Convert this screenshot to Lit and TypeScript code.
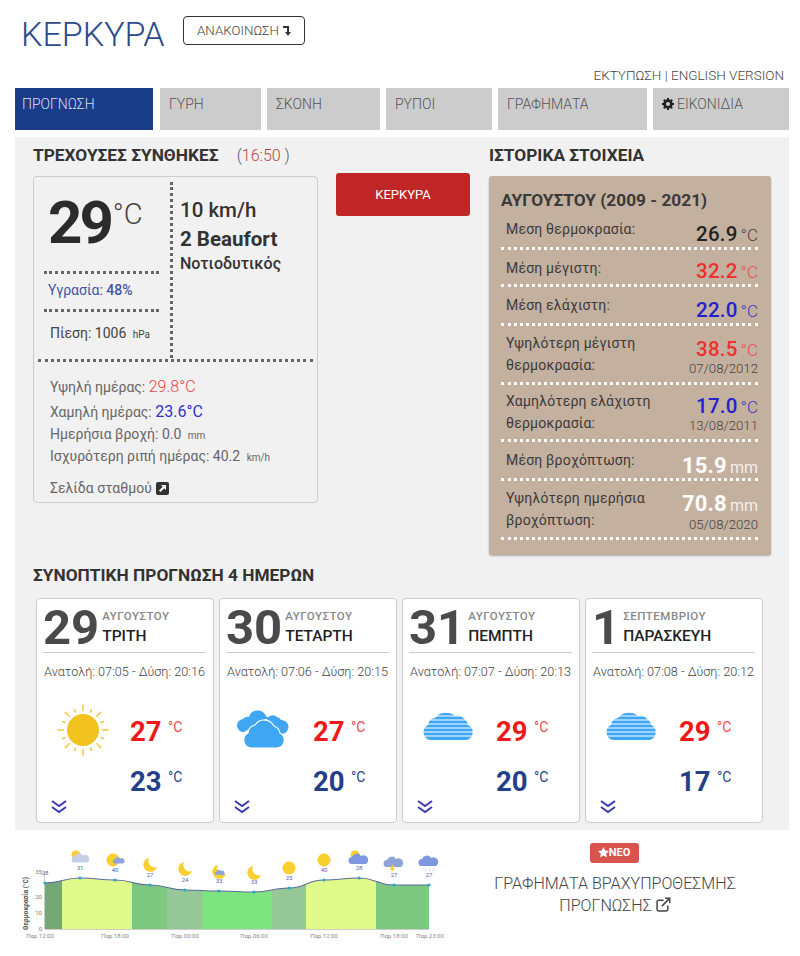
import { LitElement, html, css, svg } from "lit";
import { customElement } from "lit/decorators.js";

const sunIcon = () => html`<svg class="wx" viewBox="0 0 52 52"><circle cx="26" cy="26" r="16" fill="#f2c21f"/>
  <g stroke="#f2c84a" stroke-width="1.600" stroke-linecap="round">
  ${[...Array(16).keys()].map((i) => {
    const a = (i * Math.PI) / 8;
    const r1 = 19.5, r2 = i % 2 === 0 ? 25 : 22;
    return svg`<line x1=${26 + r1 * Math.cos(a)} y1=${26 + r1 * Math.sin(a)} x2=${26 + r2 * Math.cos(a)} y2=${26 + r2 * Math.sin(a)}/>`;
  })}</g></svg>`;

const cloudsIcon = () => html`<svg class="wx cl" viewBox="0 0 52 42">
  <g fill="#3ea6f2">
    <path d="M7 24a6.500 6.500 0 0 1-1-13 6 6 0 0 1 6-2 9 9 0 0 1 17-1 6 6 0 0 1 3 3h-4L7 24z"/>
    <path d="M30 12a6 6 0 0 1 10-3 6 6 0 0 1 4 3 7 7 0 0 1 1 14h-8z"/>
    <path d="M14 40a8 8 0 0 1-3-15 9 9 0 0 1 7-8 11 11 0 0 1 19 1 9 9 0 0 1 6 7 8 8 0 0 1-3 15z" stroke="#fff" stroke-width="1.200"/>
  </g></svg>`;

const stripeIcon = () => html`<svg class="wx wide" viewBox="0 0 54 36">
  <path d="M9 34a8 8 0 0 1-2-15 8 8 0 0 1 7-7 14 14 0 0 1 20-2 8 8 0 0 1 9 3 8 8 0 0 1 4 6 8 8 0 0 1-1 15z" fill="#3ea6f2"/>
  <g stroke="#fff" stroke-width="1.200">${[6, 10, 14, 18, 22, 26, 30].map((y) => svg`<line x1="0" x2="54" y1=${y} y2=${y}/>`)}</g>
</svg>`;

const chevrons = html`<svg class="chev" viewBox="0 0 18 16" fill="none" stroke="#3a3ab4" stroke-width="2"><path d="M2 2l7 5 7-5M2 8l7 5 7-5"/></svg>`;

type Fc = { d: string; m: string; w: string; sun: string; hi: string; lo: string; icon: () => unknown };
const FC: Fc[] = [
  { d: "29", m: "ΑΥΓΟΥΣΤΟΥ", w: "ΤΡΙΤΗ", sun: "Ανατολή: 07:05 - Δύση: 20:16", hi: "27", lo: "23", icon: sunIcon },
  { d: "30", m: "ΑΥΓΟΥΣΤΟΥ", w: "ΤΕΤΑΡΤΗ", sun: "Ανατολή: 07:06 - Δύση: 20:15", hi: "27", lo: "20", icon: cloudsIcon },
  { d: "31", m: "ΑΥΓΟΥΣΤΟΥ", w: "ΠΕΜΠΤΗ", sun: "Ανατολή: 07:07 - Δύση: 20:13", hi: "29", lo: "20", icon: stripeIcon },
  { d: "1", m: "ΣΕΠΤΕΜΒΡΙΟΥ", w: "ΠΑΡΑΣΚΕΥΗ", sun: "Ανατολή: 07:08 - Δύση: 20:12", hi: "29", lo: "17", icon: stripeIcon },
];

type Hist = { l: string[]; v: string; u: string; c: string; date?: string; h: number; lm: number; vm: number };
const HIST: Hist[] = [
  { l: ["Μεση θερμοκρασία:"], v: "26.9", u: "°C", c: "black", h: 32, lm: 0, vm: 4 },
  { l: ["Μέση μέγιστη:"], v: "32.2", u: "°C", c: "red", h: 37, lm: 7, vm: 9 },
  { l: ["Μέση ελάχιστη:"], v: "22.0", u: "°C", c: "blue", h: 39, lm: 7, vm: 11 },
  { l: ["Υψηλότερη μέγιστη", "θερμοκρασία:"], v: "38.5", u: "°C", c: "red", date: "07/08/2012", h: 59, lm: 6, vm: 11 },
  { l: ["Χαμηλότερη ελάχιστη", "θερμοκρασία:"], v: "17.0", u: "°C", c: "blue", date: "13/08/2011", h: 57, lm: 5, vm: 9 },
  { l: ["Μέση βροχόπτωση:"], v: "15.9", u: "mm", c: "white", h: 39, lm: 7, vm: 12 },
  { l: ["Υψηλότερη ημερήσια", "βροχόπτωση:"], v: "70.8", u: "mm", c: "white", date: "05/08/2020", h: 59, lm: 6, vm: 11 },
];

const PTS: [number, number, string][] = [
  [45, 883, "28"], [80, 878, "31"], [115, 880, "40"], [150, 885, "27"], [185, 890, "24"], [219, 891, "33"],
  [254, 892, "33"], [289, 888, "25"], [324, 880, "40"], [359, 878, "28"], [394, 885, "27"], [429, 885, "27"],
];
const BANDS: [number, number, string][] = [
  [45, 62, "#76a876"], [62, 132, "#e0fa8c"], [132, 167, "#7cc880"], [167, 202, "#96c796"], [202, 272, "#7de47f"],
  [272, 306, "#96c796"], [306, 376, "#e0fa8c"], [376, 429, "#7cc880"],
];
const curve = () => {
  let d = `M${PTS[0][0]} ${PTS[0][1]}`;
  for (let i = 1; i < PTS.length; i++) {
    const [x0, y0] = PTS[i - 1];
    const [x1, y1] = PTS[i];
    const mx = (x0 + x1) / 2;
    d += ` C${mx} ${y0} ${mx} ${y1} ${x1} ${y1}`;
  }
  return d;
};
const sm = (x: number, y: number, r: number) => svg`<circle cx=${x} cy=${y} r=${r} fill="#f8cf2c"/>`;
const moon = (x: number, y: number) => svg`<path d="M${x - 1} ${y - 7}a7 7 0 1 0 8 9 6.500 6.500 0 0 1-8-9z" fill="#f8cf2c"/>`;
const cl = (x: number, y: number, c: string, s = 1) =>
  svg`<path transform="translate(${x} ${y}) scale(${s})" d="M-7 4a3.500 3.500 0 0 1 0-7 5 5 0 0 1 9-1 4 4 0 0 1 5 8z" fill=${c}/>`;

@customElement("app-root")
export class AppRoot extends LitElement {
  static styles = css`
    :host { display: block; width: 800px; height: 956px; background: #fff; font-family: Roboto, "Liberation Sans", sans-serif; color: #555; overflow: hidden; }
    .top { display: flex; align-items: flex-start; padding: 16px 0 0 21px; height: 52px; box-sizing: content-box; }
    .title { font-size: 34px; font-weight: 300; color: #2b4a8c; line-height: 36px; width: 162px; }
    .notice { display: flex; align-items: center; justify-content: center; gap: 4px; width: 122px; height: 29px; box-sizing: border-box; border: 1px solid #333; border-radius: 4px; font-size: 13.300px; font-weight: 300; color: #444; }
    .notice svg { width: 8px; height: 11px; }
    .links { text-align: right; padding-right: 16px; font-size: 13.500px; font-weight: 300; line-height: 14px; color: #444; height: 20px; }
    .tabs { display: flex; gap: 6px; padding-left: 15px; height: 42px; }
    .tab { background: #ccc; color: #555; font-size: 14px; font-weight: 300; padding: 8px 0 0 9px; box-sizing: border-box; line-height: 16px; }
    .tab.on { background: #1a3d8a; color: #dde; padding-left: 7px; margin-right: 1px; }
    .tab svg { width: 12px; height: 12px; vertical-align: -1px; margin-right: 3px; }
    .panel { margin: 7px 11px 0 15px; background: #f1f1f1; height: 693px; display: flex; flex-direction: column; }
    .cols { display: flex; padding: 8px 0 0 18px; height: 428px; box-sizing: border-box; }
    h2 { margin: 0; font-size: 17.300px; font-weight: 700; color: #333; line-height: 20px; white-space: nowrap; }
    h2 span { font-size: 16px; font-weight: 300; color: #555; margin-left: 14px; }
    h2 i { font-style: normal; color: #b04848; }
    .now { width: 285px; height: 327px; margin-top: 10px; box-sizing: border-box; border: 1px solid #ccc; border-radius: 4px; display: flex; flex-direction: column; }
    .now-top { display: flex; flex: none; height: 176px; margin: 5px 0 0; }
    .now-l { width: 136px; }
    .temp { display: flex; height: 89px; padding-left: 14px; color: #2b2b2b; }
    .temp b { font-size: 60px; line-height: 68px; letter-spacing: -3px; margin-top: 7px; }
    .temp span { font-size: 29px; font-weight: 300; line-height: 30px; margin: 17px 0 0 2px; color: #444; }
    .hum { margin-left: 10px; width: 111px; height: 35px; border-top: 3px dotted #666; border-bottom: 3px dotted #666; font-size: 14px; color: #3f55a5; line-height: 32px; padding-left: 4px; }
    .hum b { font-weight: 500; }
    .pre { font-size: 14px; padding: 12px 0 0 16px; color: #444; line-height: 18px; }
    small { font-size: 10px; margin-left: 3px; line-height: 1; }
    .now-r { border-left: 3px dotted #666; padding: 14px 0 0 7px; color: #333; }
    .now-r div { font-size: 20.500px; line-height: 29px; font-weight: 500; white-space: nowrap; }
    .now-r .b { font-weight: 700; line-height: 28px; }
    .now-r .s { font-size: 16px; line-height: 22px; font-weight: 500; }
    .hr { flex: none; margin: 1px 4px 0; border-top: 3px dotted #666; }
    .now-b { padding: 13px 0 0 16px; font-size: 14px; color: #666; font-weight: 400; }
    .now-b .red { color: #ee4444; font-size: 16px; font-weight: 300; }
    .now-b .blue { color: #3030d0; font-size: 16px; font-weight: 400; }
    .r1 { height: 24px; line-height: 24px; }
    .r2, .r4 { height: 26px; line-height: 26px; }
    .r3 { height: 18px; line-height: 18px; }
    .st { padding-top: 10px; line-height: 18px; }
    .now-b svg { width: 13px; height: 13px; vertical-align: -2px; margin-left: 1px; }
    .mid { margin: 28px 0 0 18px; width: 134px; height: 43px; background: #c02626; border-radius: 3px; color: #fff; font-size: 13px; font-weight: 400; display: flex; align-items: center; justify-content: center; padding-bottom: 1px; box-sizing: border-box; }
    .left { width: 285px; }
    .right { margin-left: 19px; width: 282px; }
    .hist { margin-top: 11px; width: 282px; height: 379px; box-sizing: border-box; background: #c4b09e; border-radius: 3px; box-shadow: 0 1px 2px #aaa; padding: 14px 12px 0 12px; color: #333; }
    .hist h3 { margin: 0 0 8px; font-size: 17.300px; line-height: 20px; font-weight: 700; color: #3a3a3a; white-space: nowrap; }
    .hrow { display: flex; justify-content: space-between; border-bottom: 3px dotted #fff; box-sizing: border-box; padding: 0 0 0 5px; margin-right: 1px; }
    .hl { font-size: 14px; line-height: 22px; letter-spacing: .2px; color: #3a3a3a; }
    .hv { text-align: right; }
    .hv .n { font-size: 20.500px; line-height: 24px; font-weight: 500; letter-spacing: .2px; }
    .hv .u { font-size: 17px; margin-left: 3px; font-weight: 300; letter-spacing: 0; }
    .black .n { color: #222; } .black .u { color: #444; }
    .red .n { color: #ee3030; } .red .u { color: #ee4a4a; }
    .blue .n { color: #2222cc; } .blue .u { color: #3a3acc; }
    .white .n { color: #fff; font-weight: 700; font-size: 22px; } .white .u { color: #f4eee6; font-size: 16px; font-weight: 400; }
    .hv .date { font-size: 13.200px; line-height: 14px; color: #444; font-weight: 300; }
    .fh { padding: 0 0 0 18px; }
    .cards { display: flex; gap: 5px; padding: 13px 0 0 21px; }
    .card { width: 178px; height: 225px; box-sizing: border-box; background: #fff; border: 1px solid #ccc; border-radius: 4px; padding: 0 7px 0 6px; display: flex; flex-direction: column; }
    .ch { display: flex; height: 54px; border-bottom: 1px solid #ccc; box-sizing: border-box; }
    .num { font-size: 49px; font-weight: 700; color: #4a4a4a; line-height: 58px; margin-right: 2px; }
    .ct { padding-top: 10px; margin-left: 1px; }
    .mo { font-size: 11.500px; font-weight: 500; color: #888; line-height: 14px; letter-spacing: .5px; }
    .we { font-size: 15.500px; font-weight: 500; color: #222; line-height: 20px; margin-top: 3px; }
    .sun { font-size: 12.700px; font-weight: 300; text-align: center; color: #444; line-height: 14px; margin-top: 12px; white-space: nowrap; }
    .cb { display: flex; flex: 1; min-height: 0; }
    .ic { width: 87px; padding: 25px 0 7px 7px; box-sizing: border-box; display: flex; flex-direction: column; justify-content: space-between; }
    .wx { width: 52px; height: 52px; display: block; margin-left: 7px; }
    .wx.cl { height: 42px; margin: 4px 0 0 4px; }
    .wx.wide { width: 54px; height: 36px; margin: 2px 0 0 5px; }
    .chev { width: 18px; height: 16px; display: block; }
    .tm { padding-top: 35px; }
    .tr { display: flex; height: 50px; }
    .tr b { font-size: 27.500px; line-height: 36px; font-weight: 700; width: 38px; }
    .tr span { font-size: 14px; line-height: 26px; }
    .hi b { color: #f01818; } .hi span { color: #ee4a4a; }
    .lo b { color: #233f87; } .lo span { color: #233f87; }
    .bottom { display: flex; }
    .chart { width: 470px; height: 126px; display: block; }
    .promo { margin-left: 20px; width: 250px; text-align: center; padding-top: 12px; font-size: 16.100px; font-weight: 300; line-height: 22px; color: #444; white-space: nowrap; }
    .badge { display: inline-flex; align-items: center; justify-content: center; width: 49px; height: 20px; background: #d9534f; border-radius: 3px; color: #fff; font-size: 11px; font-weight: 700; line-height: 20px; margin: 0 2px 10px 0; }
    .badge svg { width: 11px; height: 11px; }
    .promo .ext { width: 15px; height: 15px; vertical-align: -1px; }
  `;

  private fc(f: Fc) {
    return html`<div class="card">
      <div class="ch"><div class="num">${f.d}</div><div class="ct"><div class="mo">${f.m}</div><div class="we">${f.w}</div></div></div>
      <div class="sun">${f.sun}</div>
      <div class="cb">
        <div class="ic">${f.icon()}${chevrons}</div>
        <div class="tm">
          <div class="tr hi"><b>${f.hi}</b><span>°C</span></div>
          <div class="tr lo"><b>${f.lo}</b><span>°C</span></div>
        </div>
      </div>
    </div>`;
  }

  private chart() {
    const top = curve();
    return html`<svg class="chart" viewBox="0 830 470 126" font-family="Roboto, sans-serif">
      <defs><clipPath id="under"><path d="${top} L429 929 L45 929 Z"/></clipPath></defs>
      <g clip-path="url(#under)">${BANDS.map(([a, b, c]) => svg`<rect x=${a} y="870" width=${b - a} height="60" fill=${c}/>`)}</g>
      <path d=${top} fill="none" stroke="#5b6c9c" stroke-width="1.200"/>
      <line x1="45" x2="429" y1="929.500" y2="929.500" stroke="#ccc"/>
      <line x1="44.500" x2="44.500" y1="872" y2="929" stroke="#ccc"/>
      ${PTS.map(([x, y, t]) => svg`<circle cx=${x} cy=${y} r="1.600" fill="#2ba6c6"/>
        <text x=${x} y=${y - 8} font-size="6" fill="#5566a8" text-anchor="middle">${t}</text>`)}
      ${[["35", 874], ["20", 899], ["10", 915], ["0", 931]].map(([t, y]) => svg`<text x="42" y=${y} font-size="6" fill="#777" text-anchor="end">${t}</text>`)}
      <text transform="translate(28 930) rotate(-90)" font-size="6.500" font-weight="700" fill="#555">Θερμοκρασία (°C)</text>
      ${[["Παρ.12:00", 40], ["Παρ.18:00", 115], ["Παρ.00:00", 185], ["Παρ.06:00", 254], ["Παρ.12:00", 324], ["Παρ.18:00", 394], ["Παρ.23:00", 430]].map(
        ([t, x]) => svg`<text x=${x} y="938" font-size="6" fill="#888" text-anchor="middle">${t}</text>`)}
      ${sm(76, 855, 4.500)}${cl(81, 859, "#c4cfe6", .9)}
      ${sm(113, 860, 6.500)}${cl(119, 861, "#8fa4d8", .6)}
      ${moon(150, 865)}${moon(185, 869)}
      ${moon(219, 872)}${cl(220, 873, "#8fa4d8", .5)}
      ${moon(254, 873)}${sm(289, 868, 6.500)}${sm(324, 860, 6.500)}
      ${sm(355, 855, 4.500)}${cl(359, 860, "#7d97e0")}
      ${cl(394, 863, "#8fa4d8")}<path d="M392 865l-2 5h2l-1 3 4-5h-2l1-3z" fill="#f8cf2c"/>
      ${cl(429, 862, "#7d97e0")}
      <g stroke="#c4cfe6" stroke-width=".8"><line x1="426" y1="868" x2="425" y2="871"/><line x1="430" y1="868" x2="429" y2="871"/><line x1="434" y1="868" x2="433" y2="871"/></g>
    </svg>`;
  }

  render() {
    const tabs: [string, number][] = [["ΓΥΡΗ", 101], ["ΣΚΟΝΗ", 113], ["ΡΥΠΟΙ", 106], ["ΓΡΑΦΗΜΑΤΑ", 149]];
    return html`
      <div class="top">
        <div class="title">ΚΕΡΚΥΡΑ</div>
        <div class="notice">ΑΝΑΚΟΙΝΩΣΗ <svg viewBox="0 0 8 11"><path d="M0 1h6v6h2l-3 4-3-4h2V3H0z" fill="#333"/></svg></div>
      </div>
      <div class="links">ΕΚΤΥΠΩΣΗ | ENGLISH VERSION</div>
      <div class="tabs">
        <div class="tab on" style="width:138px">ΠΡΟΓΝΩΣΗ</div>
        ${tabs.map(([t, w]) => html`<div class="tab" style="width:${w}px">${t}</div>`)}
        <div class="tab" style="width:136px"><svg viewBox="0 0 12 12"><circle cx="6" cy="6" r="3.500" fill="none" stroke="#222" stroke-width="2.500"/><g stroke="#222" stroke-width="2"><line x1="6" y1="0" x2="6" y2="12"/><line x1="0" y1="6" x2="12" y2="6"/><line x1="1.800" y1="1.800" x2="10.200" y2="10.200"/><line x1="10.200" y1="1.800" x2="1.800" y2="10.200"/></g><circle cx="6" cy="6" r="2" fill="#ccc"/></svg>ΕΙΚΟΝΙΔΙΑ</div>
      </div>
      <div class="panel">
        <div class="cols">
          <div class="left">
            <h2>ΤΡΕΧΟΥΣΕΣ ΣΥΝΘΗΚΕΣ <span>(<i>16:50</i> )</span></h2>
            <div class="now">
              <div class="now-top">
                <div class="now-l">
                  <div class="temp"><b>29</b><span>°C</span></div>
                  <div class="hum">Υγρασία: <b>48%</b></div>
                  <div class="pre">Πίεση: 1006 <small>hPa</small></div>
                </div>
                <div class="now-r"><div>10 km/h</div><div class="b">2 Beaufort</div><div class="s">Νοτιοδυτικός</div></div>
              </div>
              <div class="hr"></div>
              <div class="now-b">
                <div class="r1">Υψηλή ημέρας: <span class="red">29.8°C</span></div>
                <div class="r2">Χαμηλή ημέρας: <span class="blue">23.6°C</span></div>
                <div class="r3">Ημερήσια βροχή: 0.0 <small>mm</small></div>
                <div class="r4">Ισχυρότερη ριπή ημέρας: 40.2 <small>km/h</small></div>
                <div class="st">Σελίδα σταθμού <svg viewBox="0 0 13 13"><rect width="13" height="13" rx="2" fill="#333"/><path d="M5 3h5v5L8.300 6.300 4.500 10 3 8.500l3.700-3.800z" fill="#fff"/></svg></div>
              </div>
            </div>
          </div>
          <div class="mid">ΚΕΡΚΥΡΑ</div>
          <div class="right">
            <h2>ΙΣΤΟΡΙΚΑ ΣΤΟΙΧΕΙΑ</h2>
            <div class="hist">
              <h3>ΑΥΓΟΥΣΤΟΥ (2009 - 2021)</h3>
              ${HIST.map((r) => html`<div class="hrow" style="height:${r.h}px">
                <div class="hl" style="margin-top:${r.lm}px">${r.l.map((x) => html`<div>${x}</div>`)}</div>
                <div class="hv ${r.c}"><div class="n" style="margin-top:${r.vm}px">${r.v}<span class="u">${r.u}</span></div>${r.date ? html`<div class="date">${r.date}</div>` : ""}</div>
              </div>`)}
            </div>
          </div>
        </div>
        <h2 class="fh">ΣΥΝΟΠΤΙΚΗ ΠΡΟΓΝΩΣΗ 4 ΗΜΕΡΩΝ</h2>
        <div class="cards">${FC.map((f) => this.fc(f))}</div>
      </div>
      <div class="bottom">
        ${this.chart()}
        <div class="promo">
          <div class="badge"><svg viewBox="0 0 12 12"><path d="M6 0l1.800 3.900 4.200.5-3.100 2.900.8 4.200L6 9.400 2.300 11.500l.8-4.200L0 4.400l4.200-.5z" fill="#fff"/></svg>ΝΕΟ</div>
          <div>ΓΡΑΦΗΜΑΤΑ ΒΡΑΧΥΠΡΟΘΕΣΜΗΣ<br>ΠΡΟΓΝΩΣΗΣ <svg class="ext" viewBox="0 0 14 14" fill="none" stroke="#444" stroke-width="1.400"><path d="M11 8v3.500a1.500 1.500 0 0 1-1.500 1.500h-7A1.500 1.500 0 0 1 1 11.500v-7A1.500 1.500 0 0 1 2.500 3H7"/><path d="M5.500 8.500L12 2M8.500 1.200h4.300v4.300" /></svg></div>
        </div>
      </div>
    `;
  }
}
